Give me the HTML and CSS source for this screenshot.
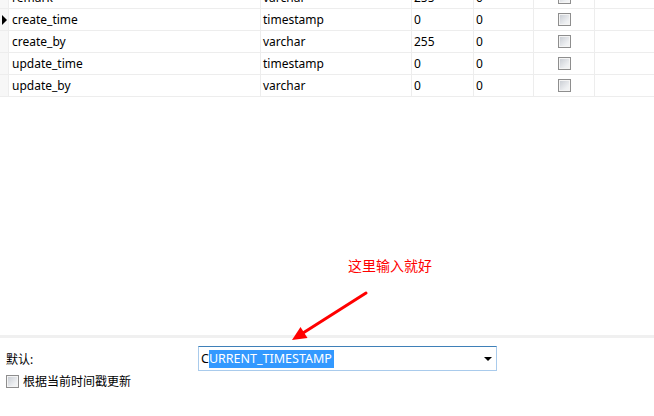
FILE: index.html
```html
<!DOCTYPE html>
<html lang="zh">
<head>
  <meta charset="UTF-8" />
  <title>字段设计</title>
  <link rel="stylesheet" href="styles.css">
</head>
<body>

<div id="grid">
  <div class="row">
    <div class="ind"></div>
    <div class="cell">remark</div>
    <div class="cell">varchar</div>
    <div class="cell num">255</div>
    <div class="cell num">0</div>
    <div class="cell chk"><span class="box"></span></div>
    <div class="cell"></div>
  </div>
  <div class="row">
    <div class="ind"><span class="cur"></span></div>
    <div class="cell">create_time</div>
    <div class="cell">timestamp</div>
    <div class="cell num">0</div>
    <div class="cell num">0</div>
    <div class="cell chk"><span class="box"></span></div>
    <div class="cell"></div>
  </div>
  <div class="row">
    <div class="ind"></div>
    <div class="cell">create_by</div>
    <div class="cell">varchar</div>
    <div class="cell num">255</div>
    <div class="cell num">0</div>
    <div class="cell chk"><span class="box"></span></div>
    <div class="cell"></div>
  </div>
  <div class="row">
    <div class="ind"></div>
    <div class="cell">update_time</div>
    <div class="cell">timestamp</div>
    <div class="cell num">0</div>
    <div class="cell num">0</div>
    <div class="cell chk"><span class="box"></span></div>
    <div class="cell"></div>
  </div>
  <div class="row">
    <div class="ind"></div>
    <div class="cell">update_by</div>
    <div class="cell">varchar</div>
    <div class="cell num">0</div>
    <div class="cell num">0</div>
    <div class="cell chk"><span class="box"></span></div>
    <div class="cell"></div>
  </div>
</div>

<div id="props">
  <div class="prop">
    <span class="prop-label">默认:</span>
    <div class="combo">
      <span class="combo-text">C<span class="sel">URRENT_TIMESTAMP</span></span>
      <span class="drop"></span>
    </div>
  </div>
  <label class="check"><span class="box"></span>根据当前时间戳更新</label>
</div>

<!-- annotation drawn over the screenshot -->
<div class="note">这里输入就好</div>
<svg class="arrow" width="654" height="416" viewBox="0 0 654 416">
  <line x1="366" y1="293" x2="303" y2="333" stroke="#f00" stroke-width="3" stroke-linecap="round"/>
  <polygon points="292,340 300.5,327 307.5,338" fill="#f00"/>
</svg>

</body>
</html>
```

FILE: styles.css
```css
body {
  margin: 0;
  height: 416px;
  overflow: hidden;
  background: #fff;
  font-family: "Noto Sans", "Noto Sans CJK SC", sans-serif;
  font-size: 12px;
  color: #000;
  display: flex;
  flex-direction: column;
  position: relative;
}
#grid {
  flex: 1;
  margin-top: -13px;
}
.row {
  display: grid;
  grid-template-columns: 9px 252px 151px 62px 60px 61px 1fr;
  height: 22px;
  border-bottom: 1px solid #ededed;
  box-sizing: border-box;
}
.ind {
  background: #f7f7f7;
  border-right: 1px solid #ededed;
  display: flex;
  align-items: center;
  padding-left: 2px;
}
.cur {
  width: 0;
  height: 0;
  border-left: 5px solid #000;
  border-top: 5px solid transparent;
  border-bottom: 5px solid transparent;
}
.cell {
  border-right: 1px solid #ededed;
  line-height: 21px;
  padding-left: 2px;
  white-space: nowrap;
  overflow: hidden;
}
.row .cell:nth-child(2) {
  padding-left: 3px;
}
.row .cell:last-child {
  border-right: none;
}
.chk {
  display: flex;
  align-items: center;
  justify-content: center;
  padding-left: 0;
}
.box {
  display: inline-block;
  width: 13px;
  height: 13px;
  box-sizing: border-box;
  border: 1px solid #8e8e8e;
  box-shadow: inset 0 0 0 1px #f4f4f4;
  background: linear-gradient(135deg, #c6cad1, #eef0f2 70%, #f6f6f6);
}
#props {
  border-top: 3px solid #f0f0f0;
  height: 81px;
  box-sizing: border-box;
  padding: 8px 0 0 6px;
}
.prop {
  display: grid;
  grid-template-columns: 192px 299px;
  align-items: center;
}
.combo {
  height: 25px;
  box-sizing: border-box;
  border: 1px solid #a9cbec;
  border-top-color: #3f80b8;
  display: flex;
  align-items: center;
  justify-content: space-between;
  padding: 0 4px 0 2px;
}
.combo-text {
  line-height: 18px;
  font-size: 12.5px;
}
.sel {
  background: #3399ff;
  color: #fff;
  display: inline-block;
  padding-right: 2px;
}
.drop {
  width: 0;
  height: 0;
  border-top: 4px solid #000;
  border-left: 4px solid transparent;
  border-right: 4px solid transparent;
  margin-top: 1px;
}
.check {
  display: flex;
  align-items: center;
  gap: 4px;
  margin-top: 1px;
}
.note {
  position: absolute;
  left: 348px;
  top: 257px;
  color: #f00;
  font-family: "Noto Sans CJK SC", sans-serif;
  font-size: 14px;
  line-height: 16px;
}
.arrow {
  position: absolute;
  left: 0;
  top: 0;
}
```
